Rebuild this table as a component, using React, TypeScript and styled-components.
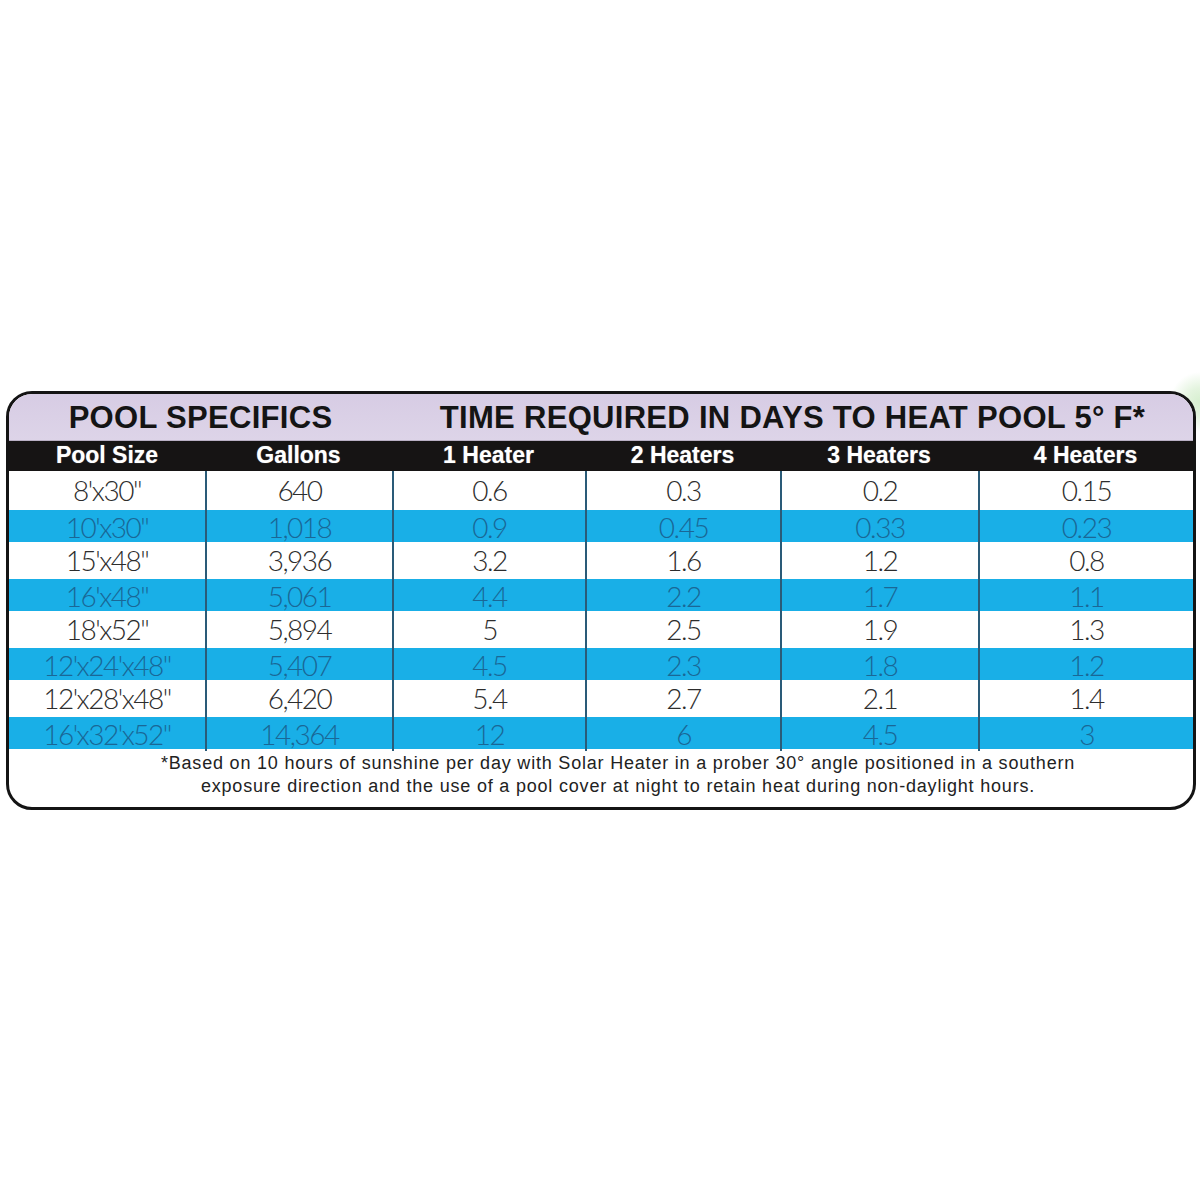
import styled, { createGlobalStyle } from "styled-components";

const GlobalStyle = createGlobalStyle`
  html, body {
    margin: 0;
    padding: 0;
    background: #fff;
  }
  body {
    font-family: "Liberation Sans", Arial, sans-serif;
  }
`;

const Page = styled.div`
  height: 1200px;
  display: flex;
  align-items: center;
  justify-content: center;
  padding: 0 4px 0 6px;
  box-sizing: border-box;
  background: radial-gradient(circle at 1200px 402px, #d6efcf 0, #e4f4df 14px, rgba(255, 255, 255, 0) 30px);
`;

const Card = styled.div`
  width: 1190px;
  height: 419px;
  box-sizing: border-box;
  border: 3px solid #141414;
  border-radius: 26px;
  overflow: hidden;
  background: #fff;
  display: flex;
  flex-direction: column;
`;

const cols = "196px 187px 193px 195px 198px 1fr";

const TitleBand = styled.div`
  display: grid;
  grid-template-columns: 383px 1fr;
  height: 46px;
  align-items: center;
  background: linear-gradient(#d7cce4, #ddd4e8);
  border-bottom: 1px solid #b9b0c4;
`;

const Title = styled.div`
  font-family: "Liberation Sans", Arial, sans-serif;
  font-weight: 700;
  font-size: 31px;
  color: #141414;
  text-align: center;
  letter-spacing: 0.3px;
  padding-top: 2px;
`;

const HeaderRow = styled.div`
  display: grid;
  grid-template-columns: ${cols};
  height: 30px;
  align-items: center;
  background: #161414;
`;

const HeadCell = styled.div`
  font-family: "Liberation Sans", Arial, sans-serif;
  font-weight: 700;
  font-size: 23px;
  color: #fff;
  text-align: center;
  text-shadow: 0 0 1px #999;
`;

const Row = styled.div<{ $blue: boolean; $h: number }>`
  display: grid;
  grid-template-columns: ${cols};
  height: ${(p) => p.$h}px;
  background: ${(p) => (p.$blue ? "#19afe7" : "#fff")};
`;

const Cell = styled.div<{ $blue: boolean }>`
  display: flex;
  align-items: center;
  justify-content: center;
  font-family: "Lato", "Liberation Sans", sans-serif;
  font-weight: 300;
  font-size: 28px;
  letter-spacing: -1.5px;
  color: ${(p) => (p.$blue ? "#1a6796" : "#2d2d2d")};
  & + & {
    border-left: 2px solid ${(p) => (p.$blue ? "#2a5b78" : "#6a6a6a")};
  }
`;

const Footnote = styled.div`
  flex: 1;
  display: flex;
  flex-direction: column;
  align-items: center;
  justify-content: center;
  padding: 0 0 6px 34px;
  font-family: "Liberation Sans", Arial, sans-serif;
  font-size: 18px;
  letter-spacing: 0.8px;
  line-height: 23px;
  color: #222;
  text-align: center;
`;

const headers = ["Pool Size", "Gallons", "1 Heater", "2 Heaters", "3 Heaters", "4 Heaters"];

const rows = [
  ["8'x30\"", "640", "0.6", "0.3", "0.2", "0.15"],
  ["10'x30\"", "1,018", "0.9", "0.45", "0.33", "0.23"],
  ["15'x48\"", "3,936", "3.2", "1.6", "1.2", "0.8"],
  ["16'x48\"", "5,061", "4.4", "2.2", "1.7", "1.1"],
  ["18'x52\"", "5,894", "5", "2.5", "1.9", "1.3"],
  ["12'x24'x48\"", "5,407", "4.5", "2.3", "1.8", "1.2"],
  ["12'x28'x48\"", "6,420", "5.4", "2.7", "2.1", "1.4"],
  ["16'x32'x52\"", "14,364", "12", "6", "4.5", "3"],
];

export default function App() {
  return (
    <>
      <GlobalStyle />
      <Page>
        <Card>
          <TitleBand>
            <Title>POOL SPECIFICS</Title>
            <Title>TIME REQUIRED IN DAYS TO HEAT POOL 5° F*</Title>
          </TitleBand>
          <HeaderRow>
            {headers.map((h) => (
              <HeadCell key={h}>{h}</HeadCell>
            ))}
          </HeaderRow>
          {rows.map((r, i) => {
            const blue = i % 2 === 1;
            return (
              <Row key={i} $blue={blue} $h={blue ? 32 : i === 0 ? 39 : 37}>
                {r.map((v, j) => (
                  <Cell key={j} $blue={blue}>
                    {v}
                  </Cell>
                ))}
              </Row>
            );
          })}
          <Footnote>
            <span>*Based on 10 hours of sunshine per day with Solar Heater in a prober 30° angle positioned in a southern</span>
            <span>exposure direction and the use of a pool cover at night to retain heat during non-daylight hours.</span>
          </Footnote>
        </Card>
      </Page>
    </>
  );
}
